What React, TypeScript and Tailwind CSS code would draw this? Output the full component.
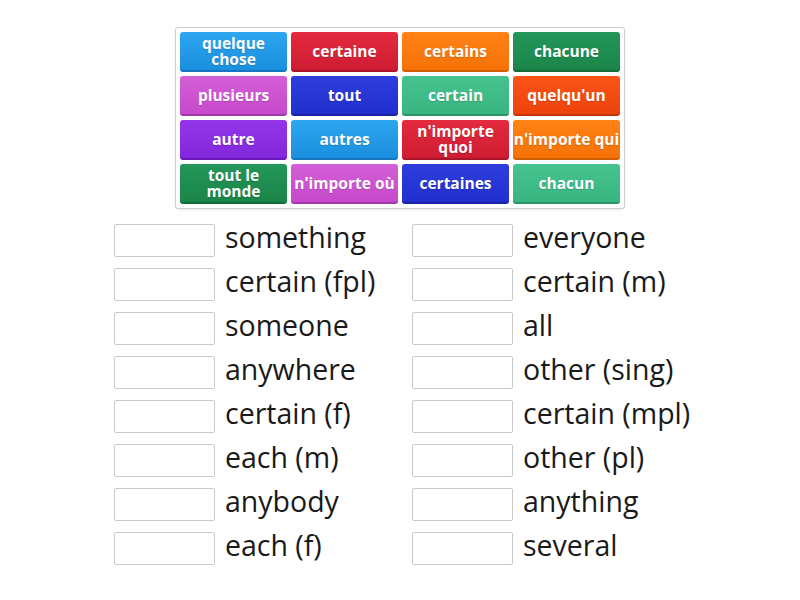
import React from "react";

type Tile = { text: string; color: string; oneLine?: boolean };

// colours repeat by theme slot, like the quiz palette
const BLUE = "bg-gradient-to-b from-[#2ea6ef] to-[#1a8fdf] border-b-[#1577c0]";
const RED = "bg-gradient-to-b from-[#e42a3f] to-[#cf1c33] border-b-[#a8142a]";
const ORANGE = "bg-gradient-to-b from-[#ff8215] to-[#f57206] border-b-[#cf5e00]";
const GREEN = "bg-gradient-to-b from-[#23965a] to-[#1b8549] border-b-[#136c3a]";
const PINK = "bg-gradient-to-b from-[#d45fd8] to-[#c649cb] border-b-[#a237a7]";
const NAVY = "bg-gradient-to-b from-[#2e3ddb] to-[#2130cd] border-b-[#1922a6]";
const TEAL = "bg-gradient-to-b from-[#46c38e] to-[#38b580] border-b-[#2a9466]";
const REDORANGE = "bg-gradient-to-b from-[#fa5417] to-[#ec430c] border-b-[#c23506]";
const PURPLE = "bg-gradient-to-b from-[#9236e8] to-[#8226db] border-b-[#6a18b8]";

const tiles: Tile[] = [
  { text: "quelque chose", color: BLUE },
  { text: "certaine", color: RED },
  { text: "certains", color: ORANGE },
  { text: "chacune", color: GREEN },
  { text: "plusieurs", color: PINK },
  { text: "tout", color: NAVY },
  { text: "certain", color: TEAL },
  { text: "quelqu'un", color: REDORANGE },
  { text: "autre", color: PURPLE },
  { text: "autres", color: BLUE },
  { text: "n'importe quoi", color: RED },
  { text: "n'importe qui", color: ORANGE, oneLine: true },
  { text: "tout le monde", color: GREEN },
  { text: "n'importe où", color: PINK, oneLine: true },
  { text: "certaines", color: NAVY },
  { text: "chacun", color: TEAL },
];

const prompts: string[] = [
  "something",
  "everyone",
  "certain (fpl)",
  "certain (m)",
  "someone",
  "all",
  "anywhere",
  "other (sing)",
  "certain (f)",
  "certain (mpl)",
  "each (m)",
  "other (pl)",
  "anybody",
  "anything",
  "each (f)",
  "several",
];

function TileButton({ tile }: { tile: Tile }) {
  return (
    <div
      className={`flex h-[40px] w-[107px] items-center justify-center overflow-hidden rounded-[3px] border-b-[2px] text-center text-[15.5px] font-bold leading-[16px] text-white [text-shadow:0_1px_1px_rgba(0,0,0,0.15)] ${tile.color}`}
    >
      <span className={tile.oneLine ? "whitespace-nowrap" : "px-[1px]"}>{tile.text}</span>
    </div>
  );
}

function PromptRow({ label }: { label: string }) {
  return (
    <div className="flex h-[33px] items-center">
      <div className="h-[33px] w-[101px] shrink-0 rounded-[2px] border border-[#c9c9c9] bg-white" />
      <span className="ml-[10px] whitespace-nowrap pb-[7px] text-[28.5px] leading-none text-[#1a1a1a]">
        {label}
      </span>
    </div>
  );
}

export default function App() {
  return (
    <div
      className="h-[600px] w-[800px] bg-white"
      style={{ fontFamily: '"Open Sans", "Liberation Sans", sans-serif' }}
    >
      <div className="flex justify-center pt-[27px]">
        <div className="grid grid-cols-4 gap-[4px] rounded-[3px] border border-[#cfcfcf] bg-white p-[4px] shadow-[0_1px_2px_rgba(0,0,0,0.08)]">
          {tiles.map((t) => (
            <TileButton key={t.text} tile={t} />
          ))}
        </div>
      </div>

      <div className="ml-[114px] mt-[15px] grid w-[596px] grid-cols-2 gap-y-[11px]">
        {prompts.map((p) => (
          <PromptRow key={p} label={p} />
        ))}
      </div>
    </div>
  );
}
